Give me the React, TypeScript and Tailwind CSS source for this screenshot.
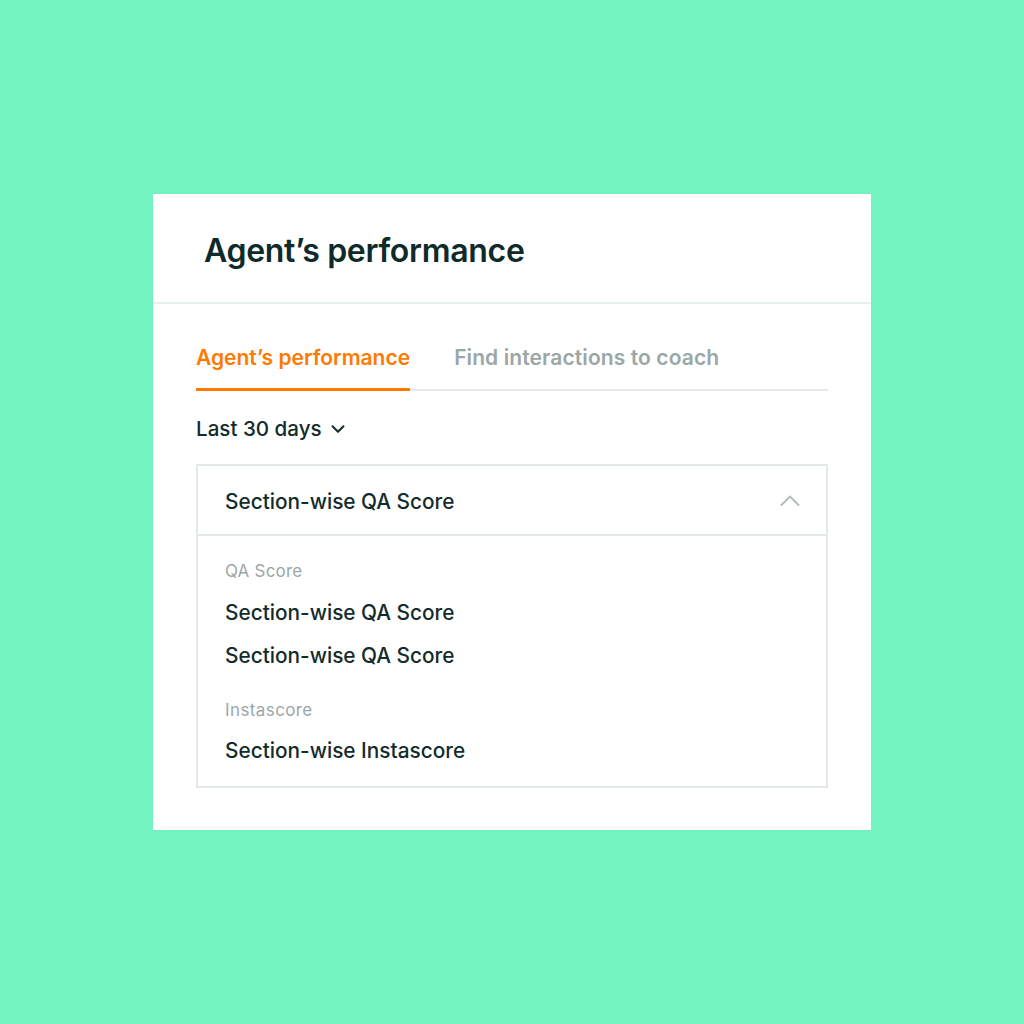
import { ChevronDown } from "lucide-react";

const font = { fontFamily: "Inter, 'Noto Sans', sans-serif" };

const PerformanceCard = () => {
    return (
        <div className="w-[718px] bg-white" style={font}>
            <div className="h-[110px] flex items-center pl-[51px] pt-[6px] border-b-2 border-[#e9eeee]">
                <h1 className="text-[32px] font-semibold text-[#0f2a2a] tracking-[-0.3px]">Agent’s performance</h1>
            </div>
            <div className="px-[43px] pt-[40px] pb-[42px]">
                <div className="flex gap-[44px] border-b-2 border-[#e6eaea]">
                    <button className="-mb-[2px] pb-[16px] border-b-[3px] border-[#ff7a00] text-[21px] leading-[28px] font-semibold text-[#ff7a00]">
                        Agent’s performance
                    </button>
                    <button className="-mb-[2px] pb-[16px] border-b-[3px] border-transparent text-[21px] leading-[28px] font-semibold text-[#9ba7a7] tracking-[0.1px]">
                        Find interactions to coach
                    </button>
                </div>
                <button className="mt-[24px] flex items-center gap-[5px] text-[20.6px] leading-[28px] font-medium text-[#142b2b]">
                    Last 30 days
                    <ChevronDown size={22} strokeWidth={2.2} className="text-[#142b2b]" />
                </button>
                <div className="mt-[21px] border-2 border-[#e3e8e8]">
                    <div className="h-[70px] flex items-center justify-between pl-[27px] pr-[26px] pt-[3px] border-b-2 border-[#e3e8e8]">
                        <span className="text-[20.8px] font-medium text-[#142b2b]">Section-wise QA Score</span>
                        <svg width="20" height="11" viewBox="0 0 20 11" fill="none" className="text-[#b3bdbd] -mt-[3px]">
                            <polyline points="1.5,10 10,1.5 18.5,10" stroke="currentColor" strokeWidth="2" strokeLinecap="round" strokeLinejoin="round" />
                        </svg>
                    </div>
                    <div className="px-[27px] pt-[23px] pb-[21px] flex flex-col">
                        <span className="text-[17px] leading-[24px] text-[#9ba7a7] tracking-[0.2px]">QA Score</span>
                        <span className="mt-[16px] text-[20.8px] leading-[28px] font-medium text-[#142b2b]">Section-wise QA Score</span>
                        <span className="mt-[15px] text-[20.8px] leading-[28px] font-medium text-[#142b2b]">Section-wise QA Score</span>
                        <span className="mt-[28px] text-[17px] leading-[24px] text-[#9ba7a7] tracking-[0.4px]">Instascore</span>
                        <span className="mt-[15px] text-[20.8px] leading-[28px] font-medium text-[#142b2b]">Section-wise Instascore</span>
                    </div>
                </div>
            </div>
        </div>
    );
};

export default function App() {
    return (
        <div className="min-h-screen w-full bg-[#73f3c0] flex items-center justify-center">
            <PerformanceCard />
        </div>
    );
}
